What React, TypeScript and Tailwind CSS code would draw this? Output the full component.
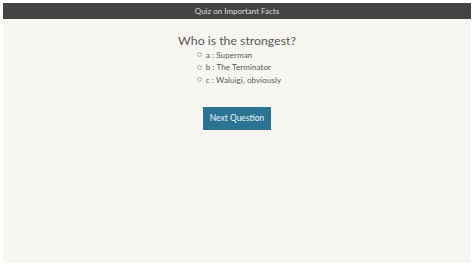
import React from "react";

export default function App() {
  const options = ["a : Superman", "b : The Terminator", "c : Waluigi, obviously"];
  return (
    <div className="w-[474px] h-[266px] bg-white p-[3px] overflow-hidden" style={{ fontFamily: "Lato, 'Open Sans', sans-serif" }}>
      <div className="h-[16px] bg-[#444444] flex items-center justify-center text-[8px] text-[#dcdcdc]">
        Quiz on Important Facts
      </div>
      <div className="h-[244px] bg-[#f7f6f1] flex flex-col items-center pt-[14px]">
        <div className="text-[12.3px] leading-[16px] text-[#5a5a5a]">Who is the strongest?</div>
        <div className="flex flex-col items-start mt-[1px] ml-[4px] gap-[3px]">
          {options.map((o) => (
            <label key={o} className="flex items-center h-[9.5px] text-[8px] text-[#555555] tracking-[0.1px]">
              <span className="w-[5px] h-[5px] rounded-full border border-[#aaaaaa] bg-white mr-[4px]" />
              {o}
            </label>
          ))}
        </div>
        <button className="mt-[22px] w-[68px] h-[23px] bg-[#2a7393] text-[#eef4f7] text-[8.5px] flex items-center justify-center">
          Next Question
        </button>
      </div>
    </div>
  );
}
